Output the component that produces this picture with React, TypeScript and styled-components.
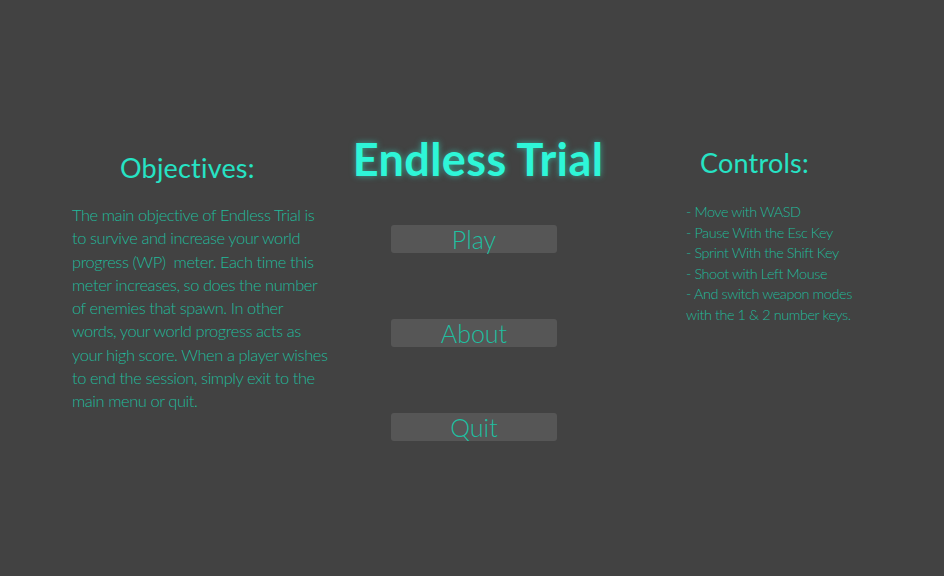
import React from "react";
import styled, { createGlobalStyle } from "styled-components";

const Global = createGlobalStyle`
  html, body { margin: 0; padding: 0; background: #424242; }
  #root { width: 944px; height: 576px; }
`;

const FONT = `"Lato", "Roboto", sans-serif`;

const Screen = styled.div`
  width: 944px;
  height: 576px;
  background: #424242;
  display: flex;
  align-items: flex-start;
  font-family: ${FONT};
  box-sizing: border-box;
  padding-left: 72px;
`;

const SideColumn = styled.div<{ $width: number; $top: number; $left: number }>`
  width: ${(p) => p.$width}px;
  margin-top: ${(p) => p.$top}px;
  margin-left: ${(p) => p.$left}px;
  display: flex;
  flex-direction: column;
`;

const Heading = styled.h2<{ $offset: number }>`
  margin: 0;
  font-family: ${FONT};
  font-weight: 400;
  font-size: 27px;
  line-height: 34px;
  color: #26e3c4;
  letter-spacing: 0.2px;
  white-space: nowrap;
  padding-left: ${(p) => p.$offset}px;
`;

const Paragraph = styled.p<{ $size: number; $line: number; $gap: number }>`
  margin: ${(p) => p.$gap}px 0 0 0;
  font-family: ${FONT};
  font-weight: 300;
  font-size: ${(p) => p.$size}px;
  line-height: ${(p) => p.$line}px;
  letter-spacing: -0.45px;
  color: #21b99b;
`;

const CenterColumn = styled.div`
  width: 296px;
  margin-top: 133px;
  display: flex;
  flex-direction: column;
  align-items: center;
`;

const Title = styled.h1`
  margin: 0 0 0 4px;
  font-family: ${FONT};
  font-weight: 700;
  font-size: 45px;
  line-height: 52px;
  letter-spacing: 0.4px;
  color: #2ef6d8;
  text-shadow: 0 0 6px rgba(46, 246, 216, 0.55);
  white-space: nowrap;
`;

const ButtonStack = styled.div`
  margin-top: 40px;
  margin-left: -4px;
  display: flex;
  flex-direction: column;
  gap: 66px;
`;

const MenuButton = styled.button`
  width: 166px;
  height: 28px;
  background: #565656;
  border: none;
  border-radius: 3px;
  padding: 0;
  font-family: ${FONT};
  font-weight: 300;
  font-size: 25px;
  line-height: 28px;
  color: #1ebfa1;
  cursor: pointer;
`;

export default function App() {
  return (
    <>
      <Global />
      <Screen>
        <SideColumn $width={256} $top={151} $left={0}>
          <Heading $offset={48}>Objectives:</Heading>
          <Paragraph $size={16.5} $line={23.3} $gap={19}>
            The main objective of Endless Trial is to survive and increase your world
            progress (WP)&nbsp; meter. Each time this meter increases, so does the number
            of enemies that spawn. In other words, your world progress acts as your high
            score. When a player wishes to end the session, simply exit to the main menu
            or quit.
          </Paragraph>
        </SideColumn>
        <CenterColumn>
          <Title>Endless Trial</Title>
          <ButtonStack>
            <MenuButton>Play</MenuButton>
            <MenuButton>About</MenuButton>
            <MenuButton>Quit</MenuButton>
          </ButtonStack>
        </CenterColumn>
        <SideColumn $width={176} $top={146} $left={62}>
          <Heading $offset={14}>Controls:</Heading>
          <Paragraph $size={14.5} $line={20.5} $gap={22}>
            - Move with WASD
            <br />- Pause With the Esc Key
            <br />- Sprint With the Shift Key
            <br />- Shoot with Left Mouse
            <br />- And switch weapon modes with the 1 &amp; 2 number keys.
          </Paragraph>
        </SideColumn>
      </Screen>
    </>
  );
}
